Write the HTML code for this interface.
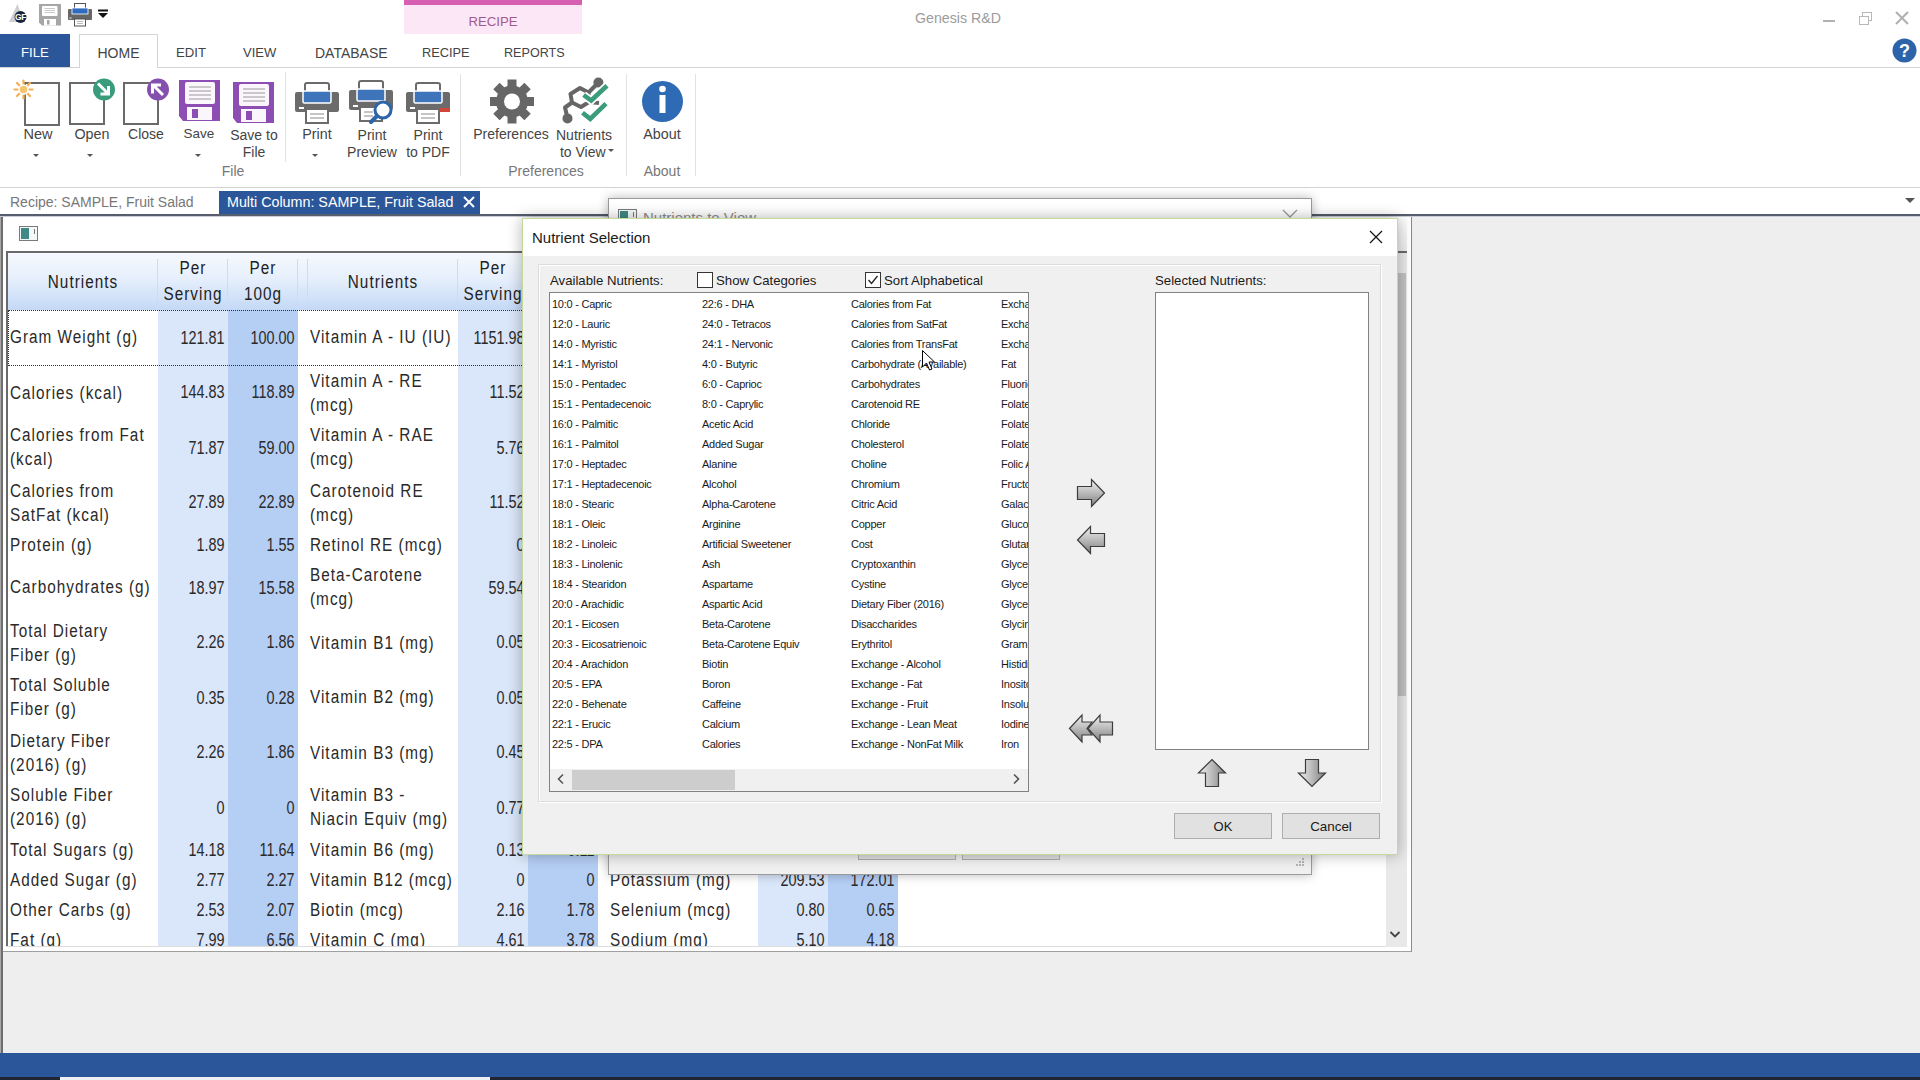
<!DOCTYPE html>
<html><head><meta charset="utf-8">
<style>
*{margin:0;padding:0;box-sizing:border-box}
html,body{width:1920px;height:1080px;overflow:hidden;background:#eeeeee;font-family:"Liberation Sans",sans-serif;position:relative}
.a{position:absolute}
.t{position:absolute;white-space:nowrap;line-height:1}
.c{text-align:center}
.r{text-align:right}
</style></head><body>
<!-- ===== title bar + ribbon (white) ===== -->
<div class="a" style="left:0;top:0;width:1920px;height:215px;background:#fff"></div>
<div class="a" style="left:0;top:187px;width:1920px;height:1px;background:#d4d4d4"></div>
<div class="a" style="left:0;top:67px;width:1920px;height:1px;background:#d4d4d4"></div>

<!-- contextual RECIPE tab -->
<div class="a" style="left:404px;top:0;width:178px;height:34px;background:#fbe7f5"></div>
<div class="a" style="left:404px;top:0;width:178px;height:5px;background:#d65fb2"></div>
<div class="t c" style="left:404px;top:15px;width:178px;font-size:13.2px;color:#a35a90">RECIPE</div>
<div class="t c" style="left:858px;top:11px;width:200px;font-size:14.2px;color:#9c9c9c">Genesis R&amp;D</div>

<!-- window controls -->
<div class="a" style="left:1823px;top:20px;width:12px;height:2px;background:#b0b0b0"></div>
<svg class="a" style="left:1858px;top:11px" width="16" height="16"><rect x="4.5" x2="" y="1.5" width="9" height="8" fill="none" stroke="#b8b8b8"/><rect x="1.5" y="5.5" width="9" height="8" fill="#fff" stroke="#b8b8b8"/></svg>
<svg class="a" style="left:1894px;top:10px" width="16" height="16"><path d="M2 2L14 14M14 2L2 14" stroke="#b0b0b0" stroke-width="2"/></svg>
<!-- help -->
<svg class="a" style="left:1892px;top:38px" width="25" height="25"><circle cx="12.5" cy="12.5" r="12" fill="#2d63a8"/><text x="12.5" y="19" font-family="Liberation Sans" font-weight="bold" font-size="18" fill="#fff" text-anchor="middle">?</text></svg>

<!-- quick access -->
<svg class="a" style="left:0;top:0" width="115" height="30">
 <path d="M17.5 4L9 22H24Z" fill="#cfcfcf"/>
 <circle cx="20.5" cy="17" r="6" fill="#16243f"/>
 <text x="20.5" y="20.3" font-family="Liberation Sans" font-weight="bold" font-size="8.5" fill="#fff" text-anchor="middle" letter-spacing="-0.5">GF</text>
 <path d="M39 4H61V25.5H42L39 22.5Z" fill="#a6a6a6"/>
 <rect x="42" y="6" width="15.5" height="10" rx="1" fill="#fff"/>
 <path d="M44.5 8.5H55M44.5 10.5H55M44.5 12.5H55" stroke="#bbb" stroke-width="0.8"/>
 <rect x="44" y="19" width="12" height="6.5" fill="#fff"/>
 <rect x="47" y="20" width="2.5" height="4.5" fill="#a6a6a6"/>
 <rect x="74.5" y="3.5" width="11" height="6" fill="#fff" stroke="#555" stroke-width="1"/>
 <rect x="68" y="9" width="24" height="11" rx="1" fill="#666"/>
 <rect x="72" y="8" width="16" height="6" fill="#2f6cc0" stroke="#fff" stroke-width="0.8"/>
 <rect x="69.5" y="17.5" width="2" height="1" fill="#fff"/>
 <rect x="74.5" y="19" width="11" height="7" fill="#fff" stroke="#555" stroke-width="1"/>
 <path d="M77 21.5H83M77 23.5H83" stroke="#999" stroke-width="0.7"/>
 <rect x="98" y="9.5" width="10" height="2" fill="#111"/>
 <path d="M98 13H108L103 18Z" fill="#111"/>
</svg>
<!-- ribbon tabs -->
<div class="a" style="left:0;top:34px;width:70px;height:33px;background:#2b579a"></div>
<div class="t c" style="left:0;top:46px;width:70px;font-size:13.2px;color:#fff">FILE</div>
<div class="a" style="left:79px;top:34px;width:79px;height:34px;background:#fff;border:1px solid #d4d4d4;border-bottom:none"></div>
<div class="t c" style="left:79px;top:46px;width:79px;font-size:14px;color:#444">HOME</div>
<div class="t" style="left:176px;top:46px;font-size:13.2px;color:#444">EDIT</div>
<div class="t" style="left:243px;top:46px;font-size:13px;color:#444">VIEW</div>
<div class="t" style="left:315px;top:46px;font-size:14px;color:#444">DATABASE</div>
<div class="t" style="left:422px;top:47px;font-size:12.8px;color:#444">RECIPE</div>
<div class="t" style="left:504px;top:47px;font-size:12.6px;color:#444">REPORTS</div>

<!-- ribbon body -->
<svg class="a" style="left:0;top:68px" width="720" height="120">
 <defs>
  <linearGradient id="sun" x1="0" y1="0" x2="1" y2="1"><stop offset="0" stop-color="#f5b65a"/><stop offset="1" stop-color="#f0a040"/></linearGradient>
 </defs>
 <!-- New -->
 <rect x="25" y="15" width="34" height="42" fill="#fff" stroke="#6a6a6a" stroke-width="2"/>
 <g transform="translate(23.5,21.5)" stroke="#f2b055" stroke-width="2.2" stroke-linecap="round">
  <line x1="-9" y1="0" x2="9" y2="0"/><line x1="0" y1="-9" x2="0" y2="9"/><line x1="-6.5" y1="-6.5" x2="6.5" y2="6.5"/><line x1="6.5" y1="-6.5" x2="-6.5" y2="6.5"/>
 </g>
 <circle cx="23.5" cy="21.5" r="4.5" fill="#f6c36e" stroke="#fff" stroke-width="1.5"/>
 <!-- Open -->
 <rect x="70" y="15" width="34" height="41" fill="#fff" stroke="#6a6a6a" stroke-width="2"/>
 <circle cx="104" cy="21.5" r="11" fill="#3a9c7c"/>
 <path d="M98 15.5L107 24.5M108.5 18V26H100.5" stroke="#fff" stroke-width="3" fill="none"/>
 <!-- Close -->
 <rect x="124" y="15" width="34" height="41" fill="#fff" stroke="#6a6a6a" stroke-width="2"/>
 <circle cx="158" cy="21.5" r="11" fill="#8550ad"/>
 <path d="M163 27L154 18M152.5 25.5V17H161" stroke="#fff" stroke-width="3" fill="none"/>
 <!-- Save -->
 <path d="M179 12H220V53H183L179 48Z" fill="#8c4eb3"/>
 <rect x="185" y="14" width="30" height="22" rx="2" fill="#fbf5fc"/>
 <path d="M189 19H211M189 23H211M189 27H211M189 31H211" stroke="#9a9a9a" stroke-width="1"/>
 <rect x="187" y="39" width="25" height="13" fill="#fbf5fc"/>
 <rect x="192" y="41" width="6" height="9" fill="#8c4eb3"/>
 <!-- Save to File -->
 <path d="M233 14H274V55H237L233 50Z" fill="#8c4eb3"/>
 <rect x="239" y="16" width="30" height="22" rx="2" fill="#fbf5fc"/>
 <path d="M243 21H265M243 25H265M243 29H265M243 33H265" stroke="#9a9a9a" stroke-width="1"/>
 <rect x="241" y="41" width="25" height="13" fill="#fbf5fc"/>
 <rect x="246" y="43" width="6" height="9" fill="#8c4eb3"/>
 <!-- separators -->
 <rect x="285" y="4" width="1" height="90" fill="#e2e2e2"/>
 <rect x="460" y="6" width="1" height="102" fill="#e2e2e2"/>
 <rect x="626" y="6" width="1" height="102" fill="#e2e2e2"/>
 <rect x="695" y="6" width="1" height="102" fill="#e2e2e2"/>
 <!-- Print -->
 <g transform="translate(295,14)">
  <rect x="10" y="1" width="24" height="12" rx="2" fill="#fff" stroke="#6b6b6b" stroke-width="2"/>
  <rect x="0" y="10" width="44" height="20" rx="2" fill="#6b6b6b"/>
  <rect x="8" y="9" width="28" height="12" rx="1.5" fill="#3d74ba" stroke="#fff" stroke-width="1.5"/>
  <rect x="4" y="25" width="5" height="2" fill="#fff"/>
  <rect x="11" y="27" width="22" height="14" fill="#fff" stroke="#6b6b6b" stroke-width="2"/>
  <path d="M15 32H29M15 36H29" stroke="#8a8a8a" stroke-width="1"/>
 </g>
 <!-- Print Preview -->
 <g transform="translate(349,12)">
  <rect x="10" y="1" width="24" height="12" rx="2" fill="#fff" stroke="#6b6b6b" stroke-width="2"/>
  <rect x="0" y="10" width="44" height="20" rx="2" fill="#6b6b6b"/>
  <rect x="8" y="9" width="28" height="12" rx="1.5" fill="#3d74ba" stroke="#fff" stroke-width="1.5"/>
  <rect x="4" y="25" width="5" height="2" fill="#fff"/>
  <rect x="11" y="27" width="22" height="14" fill="#fff" stroke="#6b6b6b" stroke-width="2"/>
  <path d="M15 32H24M15 36H24" stroke="#8a8a8a" stroke-width="1"/>
  <circle cx="34" cy="30" r="8" fill="#fff" stroke="#2e64a8" stroke-width="3"/>
  <path d="M28 36L22 42" stroke="#2e64a8" stroke-width="4" stroke-linecap="round"/>
 </g>
 <!-- Print to PDF -->
 <g transform="translate(406,14)">
  <rect x="10" y="1" width="24" height="12" rx="2" fill="#fff" stroke="#6b6b6b" stroke-width="2"/>
  <rect x="0" y="10" width="44" height="20" rx="2" fill="#6b6b6b"/>
  <rect x="8" y="9" width="28" height="12" rx="1.5" fill="#3d74ba" stroke="#fff" stroke-width="1.5"/>
  <rect x="4" y="25" width="5" height="2" fill="#fff"/>
  <rect x="11" y="27" width="22" height="14" fill="#fff" stroke="#6b6b6b" stroke-width="2"/>
  <path d="M15 32H29M15 36H29" stroke="#8a8a8a" stroke-width="1"/>
  <rect x="33" y="26" width="11" height="4" fill="#d2453a"/>
 </g>
 <!-- Gear -->
 <g transform="translate(512,33.5)" fill="#666">
  <circle r="16"/>
  <g id="teeth">
   <rect x="-4.5" y="-22" width="9" height="10"/>
   <rect x="-4.5" y="-22" width="9" height="10" transform="rotate(45)"/>
   <rect x="-4.5" y="-22" width="9" height="10" transform="rotate(90)"/>
   <rect x="-4.5" y="-22" width="9" height="10" transform="rotate(135)"/>
   <rect x="-4.5" y="-22" width="9" height="10" transform="rotate(180)"/>
   <rect x="-4.5" y="-22" width="9" height="10" transform="rotate(225)"/>
   <rect x="-4.5" y="-22" width="9" height="10" transform="rotate(270)"/>
   <rect x="-4.5" y="-22" width="9" height="10" transform="rotate(315)"/>
  </g>
  <circle r="8" fill="#fff"/>
 </g>
 <!-- Nutrients to View -->
 <g stroke="#666" stroke-width="4" fill="none" stroke-linejoin="round">
  <path d="M570.5 26L580 20L588.5 24.5L589 34L581 39L572 34.5Z"/>
  <path d="M572 34.5L565 39.5L567 48"/>
  <path d="M588.5 24.5L597 16"/>
  <path d="M589 34L599 35"/>
 </g>
 <circle cx="567.5" cy="50.4" r="5" fill="#666"/>
 <circle cx="598.4" cy="14.6" r="5" fill="#666"/>
 <g fill="none" stroke-linecap="butt">
  <path d="M583.6 27L591.2 32.5L607 17.7" stroke="#fff" stroke-width="8"/>
  <path d="M583.6 27L591.2 32.5L607 17.7" stroke="#3a9c7c" stroke-width="4.6"/>
  <path d="M582.5 44.8L590.2 50.9L606 35.6" stroke="#fff" stroke-width="8"/>
  <path d="M582.5 44.8L590.2 50.9L606 35.6" stroke="#3a9c7c" stroke-width="4.6"/>
 </g>
 <!-- About -->
 <circle cx="662.5" cy="33.5" r="20.5" fill="#2f6bb5"/>
 <circle cx="662.5" cy="21" r="3.3" fill="#fff"/>
 <rect x="659.5" y="27" width="6" height="18" fill="#fff"/>
 <!-- dropdown arrows -->
 <path d="M33 86H39L36 89Z" fill="#555"/>
 <path d="M87 86H93L90 89Z" fill="#555"/>
 <path d="M195 86H201L198 89Z" fill="#555"/>
 <path d="M312 86H318L315 89Z" fill="#555"/>
 <path d="M608 81H614L611 84Z" fill="#555"/>
</svg>
<div class="t c" style="left:-2px;top:127px;width:80px;font-size:14.5px;color:#444">New</div>
<div class="t c" style="left:52px;top:127px;width:80px;font-size:14.3px;color:#444">Open</div>
<div class="t c" style="left:106px;top:127px;width:80px;font-size:14px;color:#444">Close</div>
<div class="t c" style="left:159px;top:127px;width:80px;font-size:13.5px;color:#444">Save</div>
<div class="t c" style="left:214px;top:127px;width:80px;font-size:14px;color:#444;line-height:16.7px">Save to<br>File</div>
<div class="t c" style="left:277px;top:127px;width:80px;font-size:14.3px;color:#444">Print</div>
<div class="t c" style="left:332px;top:127px;width:80px;font-size:14px;color:#444;line-height:16.7px">Print<br>Preview</div>
<div class="t c" style="left:388px;top:127px;width:80px;font-size:14px;color:#444;line-height:16.7px">Print<br>to PDF</div>
<div class="t c" style="left:471px;top:127px;width:80px;font-size:14px;color:#444">Preferences</div>
<div class="t" style="left:556px;top:127px;font-size:14px;color:#444;line-height:16.7px">Nutrients<br>&nbsp;to View</div>
<div class="t c" style="left:622px;top:127px;width:80px;font-size:14.3px;color:#444">About</div>
<div class="t c" style="left:193px;top:164px;width:80px;font-size:14px;color:#777">File</div>
<div class="t c" style="left:486px;top:164px;width:120px;font-size:14px;color:#777">Preferences</div>
<div class="t c" style="left:622px;top:164px;width:80px;font-size:14px;color:#777">About</div>


<!-- ===== document tabs ===== -->
<div class="t" style="left:10px;top:195px;font-size:14px;color:#777">Recipe: SAMPLE, Fruit Salad</div>
<div class="a" style="left:219px;top:191px;width:261px;height:23px;background:#2b579a"></div>
<div class="t" style="left:227px;top:195px;font-size:14.3px;color:#fff">Multi Column: SAMPLE, Fruit Salad</div>
<svg class="a" style="left:462px;top:196px" width="14" height="12"><path d="M2 1L12 11M12 1L2 11" stroke="#fff" stroke-width="2"/></svg>
<svg class="a" style="left:1904px;top:197px" width="12" height="8"><path d="M1 1H11L6 6Z" fill="#555"/></svg>
<div class="a" style="left:0;top:214px;width:1920px;height:2px;background:#565d6c"></div>
<div class="a" style="left:0;top:216px;width:1920px;height:1px;background:#c8ccd6"></div>

<!-- MAIN_PANEL -->
<div class="a" style="left:0;top:217px;width:3px;height:836px;background:#6e6e6e"></div>
<div class="a" style="left:0;top:217px;width:1px;height:836px;background:#a8a8a8"></div>
<div class="a" style="left:3px;top:217px;width:1409px;height:735px;background:#fff;border-right:1px solid #8a8a8a;border-bottom:1px solid #a0a0a0"></div>
<svg class="a" style="left:19px;top:226px" width="19" height="15"><rect x="0.5" y="0.5" width="18" height="14" fill="#f4f8f8" stroke="#7a7a7a"/><rect x="2" y="2" width="8" height="11" fill="#3f8a86"/><rect x="15" y="3" width="1" height="5" fill="#777"/></svg>
<div class="a" style="left:6px;top:251px;width:1380px;height:696px;overflow:hidden">
<div class="a" style="left:0;top:0;width:1380px;height:2px;background:#6a6a6a"></div>
<div class="a" style="left:0;top:0;width:2px;height:700px;background:#6a6a6a"></div>
<div class="a" style="left:2px;top:2px;width:1378px;height:57px;background:linear-gradient(#f6f9fe,#e6effc 45%,#c4d9f6)"></div>
<div class="a" style="left:152px;top:59px;width:70px;height:700px;background:#dae6f9"></div>
<div class="a" style="left:222px;top:59px;width:70px;height:700px;background:#b5cef4"></div>
<div class="a" style="left:151px;top:8px;width:1px;height:50px;background:#cfdcee"></div>
<div class="a" style="left:221px;top:8px;width:1px;height:50px;background:#cfdcee"></div>
<div class="a" style="left:291px;top:8px;width:1px;height:50px;background:#cfdcee"></div>
<div class="a" style="left:301px;top:8px;width:1px;height:50px;background:#cfdcee"></div>
<div class="t c" style="left:2px;top:22px;width:150px;font-size:18px;color:#222;letter-spacing:1.2px;transform:scaleX(0.85);transform-origin:50% 0">Nutrients</div>
<div class="t c" style="left:152px;top:5px;width:70px;font-size:18px;line-height:25.5px;color:#222;letter-spacing:1.2px;transform:scaleX(0.85);transform-origin:50% 0">Per<br>Serving</div>
<div class="t c" style="left:222px;top:5px;width:70px;font-size:18px;line-height:25.5px;color:#222;letter-spacing:1.2px;transform:scaleX(0.85);transform-origin:50% 0">Per<br>100g</div>
<div class="a" style="left:452px;top:59px;width:70px;height:700px;background:#dae6f9"></div>
<div class="a" style="left:522px;top:59px;width:70px;height:700px;background:#b5cef4"></div>
<div class="a" style="left:451px;top:8px;width:1px;height:50px;background:#cfdcee"></div>
<div class="a" style="left:521px;top:8px;width:1px;height:50px;background:#cfdcee"></div>
<div class="a" style="left:591px;top:8px;width:1px;height:50px;background:#cfdcee"></div>
<div class="a" style="left:601px;top:8px;width:1px;height:50px;background:#cfdcee"></div>
<div class="t c" style="left:302px;top:22px;width:150px;font-size:18px;color:#222;letter-spacing:1.2px;transform:scaleX(0.85);transform-origin:50% 0">Nutrients</div>
<div class="t c" style="left:452px;top:5px;width:70px;font-size:18px;line-height:25.5px;color:#222;letter-spacing:1.2px;transform:scaleX(0.85);transform-origin:50% 0">Per<br>Serving</div>
<div class="t c" style="left:522px;top:5px;width:70px;font-size:18px;line-height:25.5px;color:#222;letter-spacing:1.2px;transform:scaleX(0.85);transform-origin:50% 0">Per<br>100g</div>
<div class="a" style="left:752px;top:59px;width:70px;height:700px;background:#dae6f9"></div>
<div class="a" style="left:822px;top:59px;width:70px;height:700px;background:#b5cef4"></div>
<div class="a" style="left:751px;top:8px;width:1px;height:50px;background:#cfdcee"></div>
<div class="a" style="left:821px;top:8px;width:1px;height:50px;background:#cfdcee"></div>
<div class="a" style="left:891px;top:8px;width:1px;height:50px;background:#cfdcee"></div>
<div class="a" style="left:901px;top:8px;width:1px;height:50px;background:#cfdcee"></div>
<div class="t c" style="left:602px;top:22px;width:150px;font-size:18px;color:#222;letter-spacing:1.2px;transform:scaleX(0.85);transform-origin:50% 0">Nutrients</div>
<div class="t c" style="left:752px;top:5px;width:70px;font-size:18px;line-height:25.5px;color:#222;letter-spacing:1.2px;transform:scaleX(0.85);transform-origin:50% 0">Per<br>Serving</div>
<div class="t c" style="left:822px;top:5px;width:70px;font-size:18px;line-height:25.5px;color:#222;letter-spacing:1.2px;transform:scaleX(0.85);transform-origin:50% 0">Per<br>100g</div>
<div class="a" style="left:2px;top:59px;width:1378px;height:56px;border:1px dotted #333;border-right:none"></div>
<div class="t" style="left:4px;top:74px;font-size:18px;line-height:24px;color:#2a2a2a;letter-spacing:1.2px;transform:scaleX(0.85);transform-origin:0 0">Gram Weight (g)</div>
<div class="t r" style="left:152px;top:78px;width:66.5px;font-size:18px;color:#2a2a2a;letter-spacing:0px;transform:scaleX(0.8);transform-origin:100% 0">121.81</div>
<div class="t r" style="left:222px;top:78px;width:66.5px;font-size:18px;color:#2a2a2a;letter-spacing:0px;transform:scaleX(0.8);transform-origin:100% 0">100.00</div>
<div class="t" style="left:304px;top:74px;font-size:18px;line-height:24px;color:#2a2a2a;letter-spacing:1.2px;transform:scaleX(0.85);transform-origin:0 0">Vitamin A - IU (IU)</div>
<div class="t r" style="left:452px;top:78px;width:66.5px;font-size:18px;color:#2a2a2a;letter-spacing:0px;transform:scaleX(0.8);transform-origin:100% 0">1151.98</div>
<div class="t r" style="left:522px;top:78px;width:66.5px;font-size:18px;color:#2a2a2a;letter-spacing:0px;transform:scaleX(0.8);transform-origin:100% 0">945.71</div>
<div class="t" style="left:4px;top:130px;font-size:18px;line-height:24px;color:#2a2a2a;letter-spacing:1.2px;transform:scaleX(0.85);transform-origin:0 0">Calories (kcal)</div>
<div class="t r" style="left:152px;top:132px;width:66.5px;font-size:18px;color:#2a2a2a;letter-spacing:0px;transform:scaleX(0.8);transform-origin:100% 0">144.83</div>
<div class="t r" style="left:222px;top:132px;width:66.5px;font-size:18px;color:#2a2a2a;letter-spacing:0px;transform:scaleX(0.8);transform-origin:100% 0">118.89</div>
<div class="t" style="left:304px;top:118px;font-size:18px;line-height:24px;color:#2a2a2a;letter-spacing:1.2px;transform:scaleX(0.85);transform-origin:0 0">Vitamin A - RE<br>(mcg)</div>
<div class="t r" style="left:452px;top:132px;width:66.5px;font-size:18px;color:#2a2a2a;letter-spacing:0px;transform:scaleX(0.8);transform-origin:100% 0">11.52</div>
<div class="t r" style="left:522px;top:132px;width:66.5px;font-size:18px;color:#2a2a2a;letter-spacing:0px;transform:scaleX(0.8);transform-origin:100% 0">9.46</div>
<div class="t" style="left:4px;top:172px;font-size:18px;line-height:24px;color:#2a2a2a;letter-spacing:1.2px;transform:scaleX(0.85);transform-origin:0 0">Calories from Fat<br>(kcal)</div>
<div class="t r" style="left:152px;top:188px;width:66.5px;font-size:18px;color:#2a2a2a;letter-spacing:0px;transform:scaleX(0.8);transform-origin:100% 0">71.87</div>
<div class="t r" style="left:222px;top:188px;width:66.5px;font-size:18px;color:#2a2a2a;letter-spacing:0px;transform:scaleX(0.8);transform-origin:100% 0">59.00</div>
<div class="t" style="left:304px;top:172px;font-size:18px;line-height:24px;color:#2a2a2a;letter-spacing:1.2px;transform:scaleX(0.85);transform-origin:0 0">Vitamin A - RAE<br>(mcg)</div>
<div class="t r" style="left:452px;top:188px;width:66.5px;font-size:18px;color:#2a2a2a;letter-spacing:0px;transform:scaleX(0.8);transform-origin:100% 0">5.76</div>
<div class="t r" style="left:522px;top:188px;width:66.5px;font-size:18px;color:#2a2a2a;letter-spacing:0px;transform:scaleX(0.8);transform-origin:100% 0">4.73</div>
<div class="t" style="left:4px;top:228px;font-size:18px;line-height:24px;color:#2a2a2a;letter-spacing:1.2px;transform:scaleX(0.85);transform-origin:0 0">Calories from<br>SatFat (kcal)</div>
<div class="t r" style="left:152px;top:242px;width:66.5px;font-size:18px;color:#2a2a2a;letter-spacing:0px;transform:scaleX(0.8);transform-origin:100% 0">27.89</div>
<div class="t r" style="left:222px;top:242px;width:66.5px;font-size:18px;color:#2a2a2a;letter-spacing:0px;transform:scaleX(0.8);transform-origin:100% 0">22.89</div>
<div class="t" style="left:304px;top:228px;font-size:18px;line-height:24px;color:#2a2a2a;letter-spacing:1.2px;transform:scaleX(0.85);transform-origin:0 0">Carotenoid RE<br>(mcg)</div>
<div class="t r" style="left:452px;top:242px;width:66.5px;font-size:18px;color:#2a2a2a;letter-spacing:0px;transform:scaleX(0.8);transform-origin:100% 0">11.52</div>
<div class="t r" style="left:522px;top:242px;width:66.5px;font-size:18px;color:#2a2a2a;letter-spacing:0px;transform:scaleX(0.8);transform-origin:100% 0">9.46</div>
<div class="t" style="left:4px;top:282px;font-size:18px;line-height:24px;color:#2a2a2a;letter-spacing:1.2px;transform:scaleX(0.85);transform-origin:0 0">Protein (g)</div>
<div class="t r" style="left:152px;top:285px;width:66.5px;font-size:18px;color:#2a2a2a;letter-spacing:0px;transform:scaleX(0.8);transform-origin:100% 0">1.89</div>
<div class="t r" style="left:222px;top:285px;width:66.5px;font-size:18px;color:#2a2a2a;letter-spacing:0px;transform:scaleX(0.8);transform-origin:100% 0">1.55</div>
<div class="t" style="left:304px;top:282px;font-size:18px;line-height:24px;color:#2a2a2a;letter-spacing:1.2px;transform:scaleX(0.85);transform-origin:0 0">Retinol RE (mcg)</div>
<div class="t r" style="left:452px;top:285px;width:66.5px;font-size:18px;color:#2a2a2a;letter-spacing:0px;transform:scaleX(0.8);transform-origin:100% 0">0</div>
<div class="t r" style="left:522px;top:285px;width:66.5px;font-size:18px;color:#2a2a2a;letter-spacing:0px;transform:scaleX(0.8);transform-origin:100% 0">0</div>
<div class="t" style="left:4px;top:324px;font-size:18px;line-height:24px;color:#2a2a2a;letter-spacing:1.2px;transform:scaleX(0.85);transform-origin:0 0">Carbohydrates (g)</div>
<div class="t r" style="left:152px;top:328px;width:66.5px;font-size:18px;color:#2a2a2a;letter-spacing:0px;transform:scaleX(0.8);transform-origin:100% 0">18.97</div>
<div class="t r" style="left:222px;top:328px;width:66.5px;font-size:18px;color:#2a2a2a;letter-spacing:0px;transform:scaleX(0.8);transform-origin:100% 0">15.58</div>
<div class="t" style="left:304px;top:312px;font-size:18px;line-height:24px;color:#2a2a2a;letter-spacing:1.2px;transform:scaleX(0.85);transform-origin:0 0">Beta-Carotene<br>(mcg)</div>
<div class="t r" style="left:452px;top:328px;width:66.5px;font-size:18px;color:#2a2a2a;letter-spacing:0px;transform:scaleX(0.8);transform-origin:100% 0">59.54</div>
<div class="t r" style="left:522px;top:328px;width:66.5px;font-size:18px;color:#2a2a2a;letter-spacing:0px;transform:scaleX(0.8);transform-origin:100% 0">48.88</div>
<div class="t" style="left:4px;top:368px;font-size:18px;line-height:24px;color:#2a2a2a;letter-spacing:1.2px;transform:scaleX(0.85);transform-origin:0 0">Total Dietary<br>Fiber (g)</div>
<div class="t r" style="left:152px;top:382px;width:66.5px;font-size:18px;color:#2a2a2a;letter-spacing:0px;transform:scaleX(0.8);transform-origin:100% 0">2.26</div>
<div class="t r" style="left:222px;top:382px;width:66.5px;font-size:18px;color:#2a2a2a;letter-spacing:0px;transform:scaleX(0.8);transform-origin:100% 0">1.86</div>
<div class="t" style="left:304px;top:380px;font-size:18px;line-height:24px;color:#2a2a2a;letter-spacing:1.2px;transform:scaleX(0.85);transform-origin:0 0">Vitamin B1 (mg)</div>
<div class="t r" style="left:452px;top:382px;width:66.5px;font-size:18px;color:#2a2a2a;letter-spacing:0px;transform:scaleX(0.8);transform-origin:100% 0">0.05</div>
<div class="t r" style="left:522px;top:382px;width:66.5px;font-size:18px;color:#2a2a2a;letter-spacing:0px;transform:scaleX(0.8);transform-origin:100% 0">0.04</div>
<div class="t" style="left:4px;top:422px;font-size:18px;line-height:24px;color:#2a2a2a;letter-spacing:1.2px;transform:scaleX(0.85);transform-origin:0 0">Total Soluble<br>Fiber (g)</div>
<div class="t r" style="left:152px;top:438px;width:66.5px;font-size:18px;color:#2a2a2a;letter-spacing:0px;transform:scaleX(0.8);transform-origin:100% 0">0.35</div>
<div class="t r" style="left:222px;top:438px;width:66.5px;font-size:18px;color:#2a2a2a;letter-spacing:0px;transform:scaleX(0.8);transform-origin:100% 0">0.28</div>
<div class="t" style="left:304px;top:434px;font-size:18px;line-height:24px;color:#2a2a2a;letter-spacing:1.2px;transform:scaleX(0.85);transform-origin:0 0">Vitamin B2 (mg)</div>
<div class="t r" style="left:452px;top:438px;width:66.5px;font-size:18px;color:#2a2a2a;letter-spacing:0px;transform:scaleX(0.8);transform-origin:100% 0">0.05</div>
<div class="t r" style="left:522px;top:438px;width:66.5px;font-size:18px;color:#2a2a2a;letter-spacing:0px;transform:scaleX(0.8);transform-origin:100% 0">0.04</div>
<div class="t" style="left:4px;top:478px;font-size:18px;line-height:24px;color:#2a2a2a;letter-spacing:1.2px;transform:scaleX(0.85);transform-origin:0 0">Dietary Fiber<br>(2016) (g)</div>
<div class="t r" style="left:152px;top:492px;width:66.5px;font-size:18px;color:#2a2a2a;letter-spacing:0px;transform:scaleX(0.8);transform-origin:100% 0">2.26</div>
<div class="t r" style="left:222px;top:492px;width:66.5px;font-size:18px;color:#2a2a2a;letter-spacing:0px;transform:scaleX(0.8);transform-origin:100% 0">1.86</div>
<div class="t" style="left:304px;top:490px;font-size:18px;line-height:24px;color:#2a2a2a;letter-spacing:1.2px;transform:scaleX(0.85);transform-origin:0 0">Vitamin B3 (mg)</div>
<div class="t r" style="left:452px;top:492px;width:66.5px;font-size:18px;color:#2a2a2a;letter-spacing:0px;transform:scaleX(0.8);transform-origin:100% 0">0.45</div>
<div class="t r" style="left:522px;top:492px;width:66.5px;font-size:18px;color:#2a2a2a;letter-spacing:0px;transform:scaleX(0.8);transform-origin:100% 0">0.37</div>
<div class="t" style="left:4px;top:532px;font-size:18px;line-height:24px;color:#2a2a2a;letter-spacing:1.2px;transform:scaleX(0.85);transform-origin:0 0">Soluble Fiber<br>(2016) (g)</div>
<div class="t r" style="left:152px;top:548px;width:66.5px;font-size:18px;color:#2a2a2a;letter-spacing:0px;transform:scaleX(0.8);transform-origin:100% 0">0</div>
<div class="t r" style="left:222px;top:548px;width:66.5px;font-size:18px;color:#2a2a2a;letter-spacing:0px;transform:scaleX(0.8);transform-origin:100% 0">0</div>
<div class="t" style="left:304px;top:532px;font-size:18px;line-height:24px;color:#2a2a2a;letter-spacing:1.2px;transform:scaleX(0.85);transform-origin:0 0">Vitamin B3 -<br>Niacin Equiv (mg)</div>
<div class="t r" style="left:452px;top:548px;width:66.5px;font-size:18px;color:#2a2a2a;letter-spacing:0px;transform:scaleX(0.8);transform-origin:100% 0">0.77</div>
<div class="t r" style="left:522px;top:548px;width:66.5px;font-size:18px;color:#2a2a2a;letter-spacing:0px;transform:scaleX(0.8);transform-origin:100% 0">0.63</div>
<div class="t" style="left:4px;top:587px;font-size:18px;line-height:24px;color:#2a2a2a;letter-spacing:1.2px;transform:scaleX(0.85);transform-origin:0 0">Total Sugars (g)</div>
<div class="t r" style="left:152px;top:590px;width:66.5px;font-size:18px;color:#2a2a2a;letter-spacing:0px;transform:scaleX(0.8);transform-origin:100% 0">14.18</div>
<div class="t r" style="left:222px;top:590px;width:66.5px;font-size:18px;color:#2a2a2a;letter-spacing:0px;transform:scaleX(0.8);transform-origin:100% 0">11.64</div>
<div class="t" style="left:304px;top:587px;font-size:18px;line-height:24px;color:#2a2a2a;letter-spacing:1.2px;transform:scaleX(0.85);transform-origin:0 0">Vitamin B6 (mg)</div>
<div class="t r" style="left:452px;top:590px;width:66.5px;font-size:18px;color:#2a2a2a;letter-spacing:0px;transform:scaleX(0.8);transform-origin:100% 0">0.13</div>
<div class="t r" style="left:522px;top:590px;width:66.5px;font-size:18px;color:#2a2a2a;letter-spacing:0px;transform:scaleX(0.8);transform-origin:100% 0">0.11</div>
<div class="t" style="left:604px;top:587px;font-size:18px;line-height:24px;color:#2a2a2a;letter-spacing:1.2px;transform:scaleX(0.85);transform-origin:0 0">Phosphorus (mg)</div>
<div class="t r" style="left:752px;top:590px;width:66.5px;font-size:18px;color:#2a2a2a;letter-spacing:0px;transform:scaleX(0.8);transform-origin:100% 0">21.93</div>
<div class="t r" style="left:822px;top:590px;width:66.5px;font-size:18px;color:#2a2a2a;letter-spacing:0px;transform:scaleX(0.8);transform-origin:100% 0">18.00</div>
<div class="t" style="left:4px;top:617px;font-size:18px;line-height:24px;color:#2a2a2a;letter-spacing:1.2px;transform:scaleX(0.85);transform-origin:0 0">Added Sugar (g)</div>
<div class="t r" style="left:152px;top:620px;width:66.5px;font-size:18px;color:#2a2a2a;letter-spacing:0px;transform:scaleX(0.8);transform-origin:100% 0">2.77</div>
<div class="t r" style="left:222px;top:620px;width:66.5px;font-size:18px;color:#2a2a2a;letter-spacing:0px;transform:scaleX(0.8);transform-origin:100% 0">2.27</div>
<div class="t" style="left:304px;top:617px;font-size:18px;line-height:24px;color:#2a2a2a;letter-spacing:1.2px;transform:scaleX(0.85);transform-origin:0 0">Vitamin B12 (mcg)</div>
<div class="t r" style="left:452px;top:620px;width:66.5px;font-size:18px;color:#2a2a2a;letter-spacing:0px;transform:scaleX(0.8);transform-origin:100% 0">0</div>
<div class="t r" style="left:522px;top:620px;width:66.5px;font-size:18px;color:#2a2a2a;letter-spacing:0px;transform:scaleX(0.8);transform-origin:100% 0">0</div>
<div class="t" style="left:604px;top:617px;font-size:18px;line-height:24px;color:#2a2a2a;letter-spacing:1.2px;transform:scaleX(0.85);transform-origin:0 0">Potassium (mg)</div>
<div class="t r" style="left:752px;top:620px;width:66.5px;font-size:18px;color:#2a2a2a;letter-spacing:0px;transform:scaleX(0.8);transform-origin:100% 0">209.53</div>
<div class="t r" style="left:822px;top:620px;width:66.5px;font-size:18px;color:#2a2a2a;letter-spacing:0px;transform:scaleX(0.8);transform-origin:100% 0">172.01</div>
<div class="t" style="left:4px;top:647px;font-size:18px;line-height:24px;color:#2a2a2a;letter-spacing:1.2px;transform:scaleX(0.85);transform-origin:0 0">Other Carbs (g)</div>
<div class="t r" style="left:152px;top:650px;width:66.5px;font-size:18px;color:#2a2a2a;letter-spacing:0px;transform:scaleX(0.8);transform-origin:100% 0">2.53</div>
<div class="t r" style="left:222px;top:650px;width:66.5px;font-size:18px;color:#2a2a2a;letter-spacing:0px;transform:scaleX(0.8);transform-origin:100% 0">2.07</div>
<div class="t" style="left:304px;top:647px;font-size:18px;line-height:24px;color:#2a2a2a;letter-spacing:1.2px;transform:scaleX(0.85);transform-origin:0 0">Biotin (mcg)</div>
<div class="t r" style="left:452px;top:650px;width:66.5px;font-size:18px;color:#2a2a2a;letter-spacing:0px;transform:scaleX(0.8);transform-origin:100% 0">2.16</div>
<div class="t r" style="left:522px;top:650px;width:66.5px;font-size:18px;color:#2a2a2a;letter-spacing:0px;transform:scaleX(0.8);transform-origin:100% 0">1.78</div>
<div class="t" style="left:604px;top:647px;font-size:18px;line-height:24px;color:#2a2a2a;letter-spacing:1.2px;transform:scaleX(0.85);transform-origin:0 0">Selenium (mcg)</div>
<div class="t r" style="left:752px;top:650px;width:66.5px;font-size:18px;color:#2a2a2a;letter-spacing:0px;transform:scaleX(0.8);transform-origin:100% 0">0.80</div>
<div class="t r" style="left:822px;top:650px;width:66.5px;font-size:18px;color:#2a2a2a;letter-spacing:0px;transform:scaleX(0.8);transform-origin:100% 0">0.65</div>
<div class="t" style="left:4px;top:677px;font-size:18px;line-height:24px;color:#2a2a2a;letter-spacing:1.2px;transform:scaleX(0.85);transform-origin:0 0">Fat (g)</div>
<div class="t r" style="left:152px;top:680px;width:66.5px;font-size:18px;color:#2a2a2a;letter-spacing:0px;transform:scaleX(0.8);transform-origin:100% 0">7.99</div>
<div class="t r" style="left:222px;top:680px;width:66.5px;font-size:18px;color:#2a2a2a;letter-spacing:0px;transform:scaleX(0.8);transform-origin:100% 0">6.56</div>
<div class="t" style="left:304px;top:677px;font-size:18px;line-height:24px;color:#2a2a2a;letter-spacing:1.2px;transform:scaleX(0.85);transform-origin:0 0">Vitamin C (mg)</div>
<div class="t r" style="left:452px;top:680px;width:66.5px;font-size:18px;color:#2a2a2a;letter-spacing:0px;transform:scaleX(0.8);transform-origin:100% 0">4.61</div>
<div class="t r" style="left:522px;top:680px;width:66.5px;font-size:18px;color:#2a2a2a;letter-spacing:0px;transform:scaleX(0.8);transform-origin:100% 0">3.78</div>
<div class="t" style="left:604px;top:677px;font-size:18px;line-height:24px;color:#2a2a2a;letter-spacing:1.2px;transform:scaleX(0.85);transform-origin:0 0">Sodium (mg)</div>
<div class="t r" style="left:752px;top:680px;width:66.5px;font-size:18px;color:#2a2a2a;letter-spacing:0px;transform:scaleX(0.8);transform-origin:100% 0">5.10</div>
<div class="t r" style="left:822px;top:680px;width:66.5px;font-size:18px;color:#2a2a2a;letter-spacing:0px;transform:scaleX(0.8);transform-origin:100% 0">4.18</div>
</div>
<div class="a" style="left:6px;top:946px;width:1380px;height:1px;background:#dcdcdc"></div>
<div class="a" style="left:1386px;top:218px;width:21px;height:33px;background:linear-gradient(#fdfdfd,#ececec)"></div>
<div class="a" style="left:1386px;top:251px;width:21px;height:2px;background:#6a6a6a"></div>
<div class="a" style="left:1386px;top:253px;width:21px;height:694px;background:#e9e9e9"></div>
<div class="a" style="left:1398px;top:273px;width:8px;height:423px;background:#c2c2c2"></div>
<svg class="a" style="left:1389px;top:930px" width="12" height="10"><path d="M1.5 2L6 6.5L10.5 2" stroke="#444" stroke-width="1.8" fill="none"/></svg>
<!-- NTV_WINDOW -->
<div class="a" style="left:608px;top:198px;width:704px;height:677px;background:#f0f0f0;border:1px solid #9a9a9a;box-shadow:0 0 10px rgba(0,0,0,0.28)"></div>
<div class="a" style="left:609px;top:199px;width:702px;height:40px;background:#fff"></div>
<svg class="a" style="left:618px;top:209px" width="19" height="15"><rect x="0.5" y="0.5" width="18" height="14" fill="#f4f8f8" stroke="#7a7a7a"/><rect x="2" y="2" width="8" height="11" fill="#3f8a86"/><rect x="15" y="3" width="1" height="5" fill="#777"/></svg>
<div class="t" style="left:643px;top:210px;font-size:15px;color:#8e8e8e">Nutrients to View</div>
<svg class="a" style="left:1281px;top:208px" width="18" height="12"><path d="M2 2L9 9L16 2" stroke="#999" stroke-width="1.3" fill="none"/></svg>
<div class="a" style="left:858px;top:850px;width:98px;height:10px;background:#e1e1e1;border:1px solid #adadad"></div>
<div class="a" style="left:962px;top:850px;width:98px;height:10px;background:#e1e1e1;border:1px solid #adadad"></div>
<svg class="a" style="left:1294px;top:858px" width="12" height="12"><g fill="#b5b5b5"><rect x="8" y="0" width="2" height="2"/><rect x="5" y="3" width="2" height="2"/><rect x="8" y="3" width="2" height="2"/><rect x="2" y="6" width="2" height="2"/><rect x="5" y="6" width="2" height="2"/><rect x="8" y="6" width="2" height="2"/></g></svg>
<div class="a" style="left:522px;top:218px;width:876px;height:637px;background:#f0f0f0;border:1px solid #c4da9c;box-shadow:0 0 14px rgba(0,0,0,0.30)">
<div class="a" style="left:0;top:0;width:874px;height:37px;background:#fff"></div>
<div class="t" style="left:9px;top:11px;font-size:15px;color:#1a1a1a">Nutrient Selection</div>
<svg class="a" style="left:846px;top:11px" width="14" height="14"><path d="M1 1L13 13M13 1L1 13" stroke="#111" stroke-width="1.2"/></svg>
<div class="a" style="left:15px;top:45px;width:843px;height:538px;border:1px solid #dcdcdc;box-shadow:inset 1px 1px 0 #fff, 1px 1px 0 #fff"></div>
<div class="t" style="left:27px;top:55px;font-size:13.2px;color:#1a1a1a">Available Nutrients:</div>
<div class="a" style="left:174px;top:53px;width:16px;height:16px;background:#fff;border:1px solid #333"></div>
<div class="t" style="left:193px;top:55px;font-size:13.2px;color:#1a1a1a">Show Categories</div>
<div class="a" style="left:342px;top:53px;width:16px;height:16px;background:#fff;border:1px solid #333"></div>
<svg class="a" style="left:343px;top:54px" width="14" height="14"><path d="M2.5 7L5.5 10.5L11.5 3" stroke="#222" stroke-width="1.3" fill="none"/></svg>
<div class="t" style="left:361px;top:55px;font-size:13.2px;color:#1a1a1a">Sort Alphabetical</div>
<div class="a" style="left:26px;top:73px;width:480px;height:500px;background:#fff;border:1px solid #828282;overflow:hidden">
<div class="t" style="left:2px;top:6px;font-size:11px;letter-spacing:-0.25px;color:#1a1a1a">10:0 - Capric</div>
<div class="t" style="left:2px;top:26px;font-size:11px;letter-spacing:-0.25px;color:#1a1a1a">12:0 - Lauric</div>
<div class="t" style="left:2px;top:46px;font-size:11px;letter-spacing:-0.25px;color:#1a1a1a">14:0 - Myristic</div>
<div class="t" style="left:2px;top:66px;font-size:11px;letter-spacing:-0.25px;color:#1a1a1a">14:1 - Myristol</div>
<div class="t" style="left:2px;top:86px;font-size:11px;letter-spacing:-0.25px;color:#1a1a1a">15:0 - Pentadec</div>
<div class="t" style="left:2px;top:106px;font-size:11px;letter-spacing:-0.25px;color:#1a1a1a">15:1 - Pentadecenoic</div>
<div class="t" style="left:2px;top:126px;font-size:11px;letter-spacing:-0.25px;color:#1a1a1a">16:0 - Palmitic</div>
<div class="t" style="left:2px;top:146px;font-size:11px;letter-spacing:-0.25px;color:#1a1a1a">16:1 - Palmitol</div>
<div class="t" style="left:2px;top:166px;font-size:11px;letter-spacing:-0.25px;color:#1a1a1a">17:0 - Heptadec</div>
<div class="t" style="left:2px;top:186px;font-size:11px;letter-spacing:-0.25px;color:#1a1a1a">17:1 - Heptadecenoic</div>
<div class="t" style="left:2px;top:206px;font-size:11px;letter-spacing:-0.25px;color:#1a1a1a">18:0 - Stearic</div>
<div class="t" style="left:2px;top:226px;font-size:11px;letter-spacing:-0.25px;color:#1a1a1a">18:1 - Oleic</div>
<div class="t" style="left:2px;top:246px;font-size:11px;letter-spacing:-0.25px;color:#1a1a1a">18:2 - Linoleic</div>
<div class="t" style="left:2px;top:266px;font-size:11px;letter-spacing:-0.25px;color:#1a1a1a">18:3 - Linolenic</div>
<div class="t" style="left:2px;top:286px;font-size:11px;letter-spacing:-0.25px;color:#1a1a1a">18:4 - Stearidon</div>
<div class="t" style="left:2px;top:306px;font-size:11px;letter-spacing:-0.25px;color:#1a1a1a">20:0 - Arachidic</div>
<div class="t" style="left:2px;top:326px;font-size:11px;letter-spacing:-0.25px;color:#1a1a1a">20:1 - Eicosen</div>
<div class="t" style="left:2px;top:346px;font-size:11px;letter-spacing:-0.25px;color:#1a1a1a">20:3 - Eicosatrienoic</div>
<div class="t" style="left:2px;top:366px;font-size:11px;letter-spacing:-0.25px;color:#1a1a1a">20:4 - Arachidon</div>
<div class="t" style="left:2px;top:386px;font-size:11px;letter-spacing:-0.25px;color:#1a1a1a">20:5 - EPA</div>
<div class="t" style="left:2px;top:406px;font-size:11px;letter-spacing:-0.25px;color:#1a1a1a">22:0 - Behenate</div>
<div class="t" style="left:2px;top:426px;font-size:11px;letter-spacing:-0.25px;color:#1a1a1a">22:1 - Erucic</div>
<div class="t" style="left:2px;top:446px;font-size:11px;letter-spacing:-0.25px;color:#1a1a1a">22:5 - DPA</div>
<div class="t" style="left:152px;top:6px;font-size:11px;letter-spacing:-0.25px;color:#1a1a1a">22:6 - DHA</div>
<div class="t" style="left:152px;top:26px;font-size:11px;letter-spacing:-0.25px;color:#1a1a1a">24:0 - Tetracos</div>
<div class="t" style="left:152px;top:46px;font-size:11px;letter-spacing:-0.25px;color:#1a1a1a">24:1 - Nervonic</div>
<div class="t" style="left:152px;top:66px;font-size:11px;letter-spacing:-0.25px;color:#1a1a1a">4:0 - Butyric</div>
<div class="t" style="left:152px;top:86px;font-size:11px;letter-spacing:-0.25px;color:#1a1a1a">6:0 - Caprioc</div>
<div class="t" style="left:152px;top:106px;font-size:11px;letter-spacing:-0.25px;color:#1a1a1a">8:0 - Caprylic</div>
<div class="t" style="left:152px;top:126px;font-size:11px;letter-spacing:-0.25px;color:#1a1a1a">Acetic Acid</div>
<div class="t" style="left:152px;top:146px;font-size:11px;letter-spacing:-0.25px;color:#1a1a1a">Added Sugar</div>
<div class="t" style="left:152px;top:166px;font-size:11px;letter-spacing:-0.25px;color:#1a1a1a">Alanine</div>
<div class="t" style="left:152px;top:186px;font-size:11px;letter-spacing:-0.25px;color:#1a1a1a">Alcohol</div>
<div class="t" style="left:152px;top:206px;font-size:11px;letter-spacing:-0.25px;color:#1a1a1a">Alpha-Carotene</div>
<div class="t" style="left:152px;top:226px;font-size:11px;letter-spacing:-0.25px;color:#1a1a1a">Arginine</div>
<div class="t" style="left:152px;top:246px;font-size:11px;letter-spacing:-0.25px;color:#1a1a1a">Artificial Sweetener</div>
<div class="t" style="left:152px;top:266px;font-size:11px;letter-spacing:-0.25px;color:#1a1a1a">Ash</div>
<div class="t" style="left:152px;top:286px;font-size:11px;letter-spacing:-0.25px;color:#1a1a1a">Aspartame</div>
<div class="t" style="left:152px;top:306px;font-size:11px;letter-spacing:-0.25px;color:#1a1a1a">Aspartic Acid</div>
<div class="t" style="left:152px;top:326px;font-size:11px;letter-spacing:-0.25px;color:#1a1a1a">Beta-Carotene</div>
<div class="t" style="left:152px;top:346px;font-size:11px;letter-spacing:-0.25px;color:#1a1a1a">Beta-Carotene Equiv</div>
<div class="t" style="left:152px;top:366px;font-size:11px;letter-spacing:-0.25px;color:#1a1a1a">Biotin</div>
<div class="t" style="left:152px;top:386px;font-size:11px;letter-spacing:-0.25px;color:#1a1a1a">Boron</div>
<div class="t" style="left:152px;top:406px;font-size:11px;letter-spacing:-0.25px;color:#1a1a1a">Caffeine</div>
<div class="t" style="left:152px;top:426px;font-size:11px;letter-spacing:-0.25px;color:#1a1a1a">Calcium</div>
<div class="t" style="left:152px;top:446px;font-size:11px;letter-spacing:-0.25px;color:#1a1a1a">Calories</div>
<div class="t" style="left:301px;top:6px;font-size:11px;letter-spacing:-0.25px;color:#1a1a1a">Calories from Fat</div>
<div class="t" style="left:301px;top:26px;font-size:11px;letter-spacing:-0.25px;color:#1a1a1a">Calories from SatFat</div>
<div class="t" style="left:301px;top:46px;font-size:11px;letter-spacing:-0.25px;color:#1a1a1a">Calories from TransFat</div>
<div class="t" style="left:301px;top:66px;font-size:11px;letter-spacing:-0.25px;color:#1a1a1a">Carbohydrate (Available)</div>
<div class="t" style="left:301px;top:86px;font-size:11px;letter-spacing:-0.25px;color:#1a1a1a">Carbohydrates</div>
<div class="t" style="left:301px;top:106px;font-size:11px;letter-spacing:-0.25px;color:#1a1a1a">Carotenoid RE</div>
<div class="t" style="left:301px;top:126px;font-size:11px;letter-spacing:-0.25px;color:#1a1a1a">Chloride</div>
<div class="t" style="left:301px;top:146px;font-size:11px;letter-spacing:-0.25px;color:#1a1a1a">Cholesterol</div>
<div class="t" style="left:301px;top:166px;font-size:11px;letter-spacing:-0.25px;color:#1a1a1a">Choline</div>
<div class="t" style="left:301px;top:186px;font-size:11px;letter-spacing:-0.25px;color:#1a1a1a">Chromium</div>
<div class="t" style="left:301px;top:206px;font-size:11px;letter-spacing:-0.25px;color:#1a1a1a">Citric Acid</div>
<div class="t" style="left:301px;top:226px;font-size:11px;letter-spacing:-0.25px;color:#1a1a1a">Copper</div>
<div class="t" style="left:301px;top:246px;font-size:11px;letter-spacing:-0.25px;color:#1a1a1a">Cost</div>
<div class="t" style="left:301px;top:266px;font-size:11px;letter-spacing:-0.25px;color:#1a1a1a">Cryptoxanthin</div>
<div class="t" style="left:301px;top:286px;font-size:11px;letter-spacing:-0.25px;color:#1a1a1a">Cystine</div>
<div class="t" style="left:301px;top:306px;font-size:11px;letter-spacing:-0.25px;color:#1a1a1a">Dietary Fiber (2016)</div>
<div class="t" style="left:301px;top:326px;font-size:11px;letter-spacing:-0.25px;color:#1a1a1a">Disaccharides</div>
<div class="t" style="left:301px;top:346px;font-size:11px;letter-spacing:-0.25px;color:#1a1a1a">Erythritol</div>
<div class="t" style="left:301px;top:366px;font-size:11px;letter-spacing:-0.25px;color:#1a1a1a">Exchange - Alcohol</div>
<div class="t" style="left:301px;top:386px;font-size:11px;letter-spacing:-0.25px;color:#1a1a1a">Exchange - Fat</div>
<div class="t" style="left:301px;top:406px;font-size:11px;letter-spacing:-0.25px;color:#1a1a1a">Exchange - Fruit</div>
<div class="t" style="left:301px;top:426px;font-size:11px;letter-spacing:-0.25px;color:#1a1a1a">Exchange - Lean Meat</div>
<div class="t" style="left:301px;top:446px;font-size:11px;letter-spacing:-0.25px;color:#1a1a1a">Exchange - NonFat Milk</div>
<div class="t" style="left:451px;top:6px;font-size:11px;letter-spacing:-0.25px;color:#1a1a1a">Exchange - Starch</div>
<div class="t" style="left:451px;top:26px;font-size:11px;letter-spacing:-0.25px;color:#1a1a1a">Exchange - Vegetable</div>
<div class="t" style="left:451px;top:46px;font-size:11px;letter-spacing:-0.25px;color:#1a1a1a">Exchange - Very Lean</div>
<div class="t" style="left:451px;top:66px;font-size:11px;letter-spacing:-0.25px;color:#1a1a1a">Fat</div>
<div class="t" style="left:451px;top:86px;font-size:11px;letter-spacing:-0.25px;color:#1a1a1a">Fluoride</div>
<div class="t" style="left:451px;top:106px;font-size:11px;letter-spacing:-0.25px;color:#1a1a1a">Folate</div>
<div class="t" style="left:451px;top:126px;font-size:11px;letter-spacing:-0.25px;color:#1a1a1a">Folate - DFE</div>
<div class="t" style="left:451px;top:146px;font-size:11px;letter-spacing:-0.25px;color:#1a1a1a">Folate - Food</div>
<div class="t" style="left:451px;top:166px;font-size:11px;letter-spacing:-0.25px;color:#1a1a1a">Folic Acid</div>
<div class="t" style="left:451px;top:186px;font-size:11px;letter-spacing:-0.25px;color:#1a1a1a">Fructose</div>
<div class="t" style="left:451px;top:206px;font-size:11px;letter-spacing:-0.25px;color:#1a1a1a">Galactose</div>
<div class="t" style="left:451px;top:226px;font-size:11px;letter-spacing:-0.25px;color:#1a1a1a">Glucose</div>
<div class="t" style="left:451px;top:246px;font-size:11px;letter-spacing:-0.25px;color:#1a1a1a">Glutamic Acid</div>
<div class="t" style="left:451px;top:266px;font-size:11px;letter-spacing:-0.25px;color:#1a1a1a">Glycemic Index</div>
<div class="t" style="left:451px;top:286px;font-size:11px;letter-spacing:-0.25px;color:#1a1a1a">Glycemic Load</div>
<div class="t" style="left:451px;top:306px;font-size:11px;letter-spacing:-0.25px;color:#1a1a1a">Glycerin</div>
<div class="t" style="left:451px;top:326px;font-size:11px;letter-spacing:-0.25px;color:#1a1a1a">Glycine</div>
<div class="t" style="left:451px;top:346px;font-size:11px;letter-spacing:-0.25px;color:#1a1a1a">Gram Weight</div>
<div class="t" style="left:451px;top:366px;font-size:11px;letter-spacing:-0.25px;color:#1a1a1a">Histidine</div>
<div class="t" style="left:451px;top:386px;font-size:11px;letter-spacing:-0.25px;color:#1a1a1a">Inositol</div>
<div class="t" style="left:451px;top:406px;font-size:11px;letter-spacing:-0.25px;color:#1a1a1a">Insoluble Fiber</div>
<div class="t" style="left:451px;top:426px;font-size:11px;letter-spacing:-0.25px;color:#1a1a1a">Iodine</div>
<div class="t" style="left:451px;top:446px;font-size:11px;letter-spacing:-0.25px;color:#1a1a1a">Iron</div>
<div class="a" style="left:0;top:476px;width:478px;height:22px;background:#f0f0f0"></div>
<div class="a" style="left:22px;top:477px;width:163px;height:20px;background:#cdcdcd"></div>
<svg class="a" style="left:6px;top:480px" width="10" height="12"><path d="M7 1.5L2.5 6L7 10.5" stroke="#555" stroke-width="1.6" fill="none"/></svg>
<svg class="a" style="left:461px;top:480px" width="10" height="12"><path d="M3 1.5L7.5 6L3 10.5" stroke="#555" stroke-width="1.6" fill="none"/></svg>
</div>
<div class="t" style="left:632px;top:55px;font-size:13.2px;color:#1a1a1a">Selected Nutrients:</div>
<div class="a" style="left:632px;top:73px;width:214px;height:458px;background:#fff;border:1px solid #828282"></div>
<svg class="a" style="left:553px;top:259px" width="30" height="30"><defs><linearGradient id="agr" x1="0" y1="0" x2="0" y2="1"><stop offset="0" stop-color="#f2f2f2"/><stop offset="0.55" stop-color="#b4b4b4"/><stop offset="1" stop-color="#7e7e7e"/></linearGradient></defs><path d="M1.5 8.5H15.5V1.5L28.5 15L15.5 28.5V21.5H1.5Z" fill="url(#agr)" stroke="#3c3c3c" stroke-width="1.2"/></svg>
<svg class="a" style="left:553px;top:306px" width="30" height="30"><defs><linearGradient id="agl" x1="0" y1="0" x2="0" y2="1"><stop offset="0" stop-color="#f2f2f2"/><stop offset="0.55" stop-color="#b4b4b4"/><stop offset="1" stop-color="#7e7e7e"/></linearGradient></defs><path d="M28.5 8.5H14.5V1.5L1.5 15L14.5 28.5V21.5H28.5Z" fill="url(#agl)" stroke="#3c3c3c" stroke-width="1.2"/></svg>
<svg class="a" style="left:545px;top:494px" width="46" height="31"><defs><linearGradient id="agdl" x1="0" y1="0" x2="0" y2="1"><stop offset="0" stop-color="#f2f2f2"/><stop offset="0.55" stop-color="#b4b4b4"/><stop offset="1" stop-color="#7e7e7e"/></linearGradient></defs><path d="M44.5 9H32V2L20 15.5L32 29V22H44.5Z" fill="url(#agdl)" stroke="#3c3c3c" stroke-width="1.2"/></svg>
<svg class="a" style="left:545px;top:494px" width="46" height="31"><defs><linearGradient id="agd2" x1="0" y1="0" x2="0" y2="1"><stop offset="0" stop-color="#f2f2f2"/><stop offset="0.55" stop-color="#b4b4b4"/><stop offset="1" stop-color="#7e7e7e"/></linearGradient></defs><path d="M1.5 15.5L14 2V9H24L19 15.5L24 22H14V29Z" fill="url(#agd2)" stroke="#3c3c3c" stroke-width="1.2"/></svg>
<svg class="a" style="left:674px;top:539px" width="30" height="30"><defs><linearGradient id="agu" x1="0" y1="0" x2="1" y2="0"><stop offset="0" stop-color="#f2f2f2"/><stop offset="0.55" stop-color="#b4b4b4"/><stop offset="1" stop-color="#7e7e7e"/></linearGradient></defs><path d="M8.5 28.5V15H1.5L15 1.5L28.5 15H21.5V28.5Z" fill="url(#agu)" stroke="#3c3c3c" stroke-width="1.2"/></svg>
<svg class="a" style="left:774px;top:539px" width="30" height="30"><defs><linearGradient id="agd" x1="0" y1="0" x2="1" y2="0"><stop offset="0" stop-color="#f2f2f2"/><stop offset="0.55" stop-color="#b4b4b4"/><stop offset="1" stop-color="#7e7e7e"/></linearGradient></defs><path d="M8.5 1.5V15H1.5L15 28.5L28.5 15H21.5V1.5Z" fill="url(#agd)" stroke="#3c3c3c" stroke-width="1.2"/></svg>
<div class="a" style="left:651px;top:594px;width:98px;height:26px;background:#e1e1e1;border:1px solid #adadad"></div>
<div class="t c" style="left:651px;top:601px;width:98px;font-size:13px;color:#1a1a1a">OK</div>
<div class="a" style="left:759px;top:594px;width:98px;height:26px;background:#e1e1e1;border:1px solid #adadad"></div>
<div class="t c" style="left:759px;top:601px;width:98px;font-size:13.4px;color:#1a1a1a">Cancel</div>
</div>
<svg class="a" style="left:922px;top:350px" width="14" height="22"><path d="M0.5 0.5V17L4.5 13L7.5 20L10 19L7 12H12.5Z" fill="#fff" stroke="#000" stroke-width="1"/></svg>
<!-- status bar -->
<div class="a" style="left:0;top:1053px;width:1920px;height:24px;background:#2b579a"></div>
<div class="a" style="left:0;top:1077px;width:1920px;height:3px;background:#1f2533"></div>
<div class="a" style="left:60px;top:1077px;width:430px;height:3px;background:#eef0f4"></div>
</body></html>
